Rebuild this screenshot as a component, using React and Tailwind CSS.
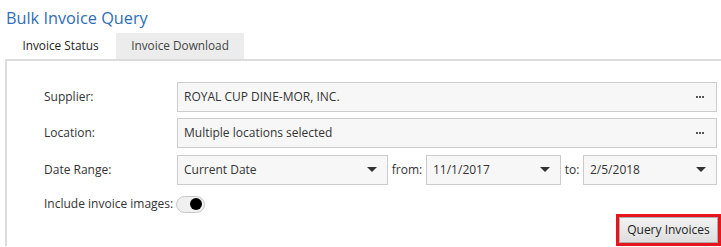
import React, { useState } from 'react';

function Caret() {
  return (
    <svg width="10" height="6" viewBox="0 0 10 6" className="shrink-0">
      <path d="M0 0 L10 0 L5 5 Z" fill="#333" />
    </svg>
  );
}

function Dots() {
  return (
    <span className="flex gap-[1px] shrink-0">
      <span className="w-[2px] h-[2px] bg-[#555]" />
      <span className="w-[2px] h-[2px] bg-[#555]" />
      <span className="w-[2px] h-[2px] bg-[#555]" />
    </span>
  );
}

function Picker({ value, className }) {
  return (
    <div className={`h-[30px] flex items-center justify-between bg-[#f7f7f7] border border-[#cccccc] pl-[6px] pr-[12px] ${className}`}>
      <span className="truncate">{value}</span>
      <Dots />
    </div>
  );
}

function Select({ value, className }) {
  return (
    <div className={`h-[30px] flex items-center justify-between bg-[#f7f7f7] border border-[#cccccc] pl-[6px] pr-[10px] ${className}`}>
      <span className="truncate">{value}</span>
      <Caret />
    </div>
  );
}

export default function App() {
  const [images, setImages] = useState(true);

  return (
    <div
      className="w-[721px] h-[247px] overflow-hidden bg-white text-[#333] text-[12px] whitespace-nowrap"
      style={{ fontFamily: '"Open Sans", "Noto Sans", sans-serif' }}
    >
      {/* Titulo */}
      <h1 className="pl-[6px] pt-[6px] h-[33px] text-[16.3px] leading-[24px] text-[#2f6db5]">Bulk Invoice Query</h1>

      {/* Abas */}
      <div className="flex ml-[5px] h-[26px] text-[11.8px]">
        <div className="w-[111px] flex items-center justify-center bg-white text-[#222]">Invoice Status</div>
        <div className="w-[128px] flex items-center justify-center bg-[#ececec] text-[#444]">Invoice Download</div>
      </div>

      {/* Painel */}
      <div className="ml-[5px] border-t-2 border-l-2 border-[#dcdcdc] pt-[21px] pl-[37px] pr-[4px]">
        <div className="flex flex-col gap-[6px]">
          <div className="flex items-center">
            <label className="w-[133px] shrink-0">Supplier:</label>
            <Picker value="ROYAL CUP DINE-MOR, INC." className="flex-1" />
          </div>

          <div className="flex items-center">
            <label className="w-[133px] shrink-0">Location:</label>
            <Picker value="Multiple locations selected" className="flex-1" />
          </div>

          <div className="flex items-center mt-[1px]">
            <label className="w-[133px] shrink-0">Date Range:</label>
            <Select value="Current Date" className="w-[211px]" />
            <span className="w-[38px] text-center">from:</span>
            <Select value="11/1/2017" className="w-[135px]" />
            <span className="w-[22px] text-center">to:</span>
            <Select value="2/5/2018" className="flex-1" />
          </div>

          <div className="flex items-center h-[22px] mt-[2px]">
            <label className="shrink-0 w-[132px]">Include invoice images:</label>
            <button
              onClick={() => setImages(!images)}
              className={`w-[29px] h-[17px] rounded-full border border-[#c8c8c8] bg-[#f0f0f0] flex items-center px-[2px] ${images ? 'justify-end' : 'justify-start'}`}
            >
              <span className="w-[12px] h-[12px] rounded-full bg-black" />
            </button>
          </div>
        </div>

        <div className="flex justify-end mt-[-1px]">
          <div className="border-[3px] border-[#e8141c] mr-[-4px] w-[105px] h-[32px]">
            <button className="w-full h-full text-[12px] text-[#222] border border-[#adadad] bg-gradient-to-b from-[#f2f2f2] to-[#dedede]">
              Query Invoices
            </button>
          </div>
        </div>
      </div>
    </div>
  );
}
